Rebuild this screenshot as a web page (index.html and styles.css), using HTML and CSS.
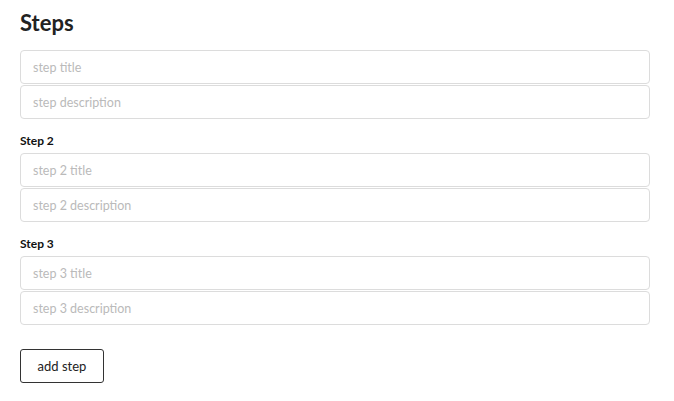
FILE: index.html
```html
<!DOCTYPE html>
<html>
<head>
<meta charset="utf-8">
<link rel="stylesheet" href="styles.css">
</head>
<body>
<div class="page">
  <h1 class="title">Steps</h1>
  <div class="step">
    <input class="field" type="text" placeholder="step title">
    <input class="field" type="text" placeholder="step description">
  </div>
  <div class="step">
    <label class="step-label">Step 2</label>
    <input class="field" type="text" placeholder="step 2 title">
    <input class="field" type="text" placeholder="step 2 description">
  </div>
  <div class="step">
    <label class="step-label">Step 3</label>
    <input class="field" type="text" placeholder="step 3 title">
    <input class="field" type="text" placeholder="step 3 description">
  </div>
  <button class="add-btn" type="button">add step</button>
</div>
</body>
</html>
```
FILE: styles.css
```css
html, body {
  margin: 0;
  padding: 0;
  background: #fff;
}
body {
  font-family: Lato, "Liberation Sans", sans-serif;
  color: #222;
}
.page {
  width: 630px;
  padding: 10px 20px 20px 20px;
  display: flex;
  flex-direction: column;
}
.title {
  margin: 0 0 15px 0;
  font-size: 22px;
  font-weight: 700;
  line-height: 25px;
  color: #222;
}
.step {
  display: flex;
  flex-direction: column;
  gap: 1px;
  margin-bottom: 15px;
}
.step-label {
  font-size: 12px;
  font-weight: 700;
  line-height: 14px;
  margin-bottom: 4px;
  color: #111;
}
.field {
  box-sizing: border-box;
  height: 34px;
  width: 100%;
  margin: 0;
  border: 1px solid #dcdcdc;
  border-radius: 4px;
  padding: 0 12px;
  font-family: Lato, "Liberation Sans", sans-serif;
  font-size: 12.5px;
  color: #333;
  background: #fff;
  outline: none;
}
.field::placeholder {
  color: #bababa;
}
.add-btn {
  align-self: flex-start;
  margin-top: 9px;
  box-sizing: border-box;
  width: 84px;
  height: 34px;
  background: #fff;
  border: 1px solid #333;
  border-radius: 3px;
  font-family: Lato, "Liberation Sans", sans-serif;
  font-size: 13px;
  color: #222;
  padding: 0;
}
```
